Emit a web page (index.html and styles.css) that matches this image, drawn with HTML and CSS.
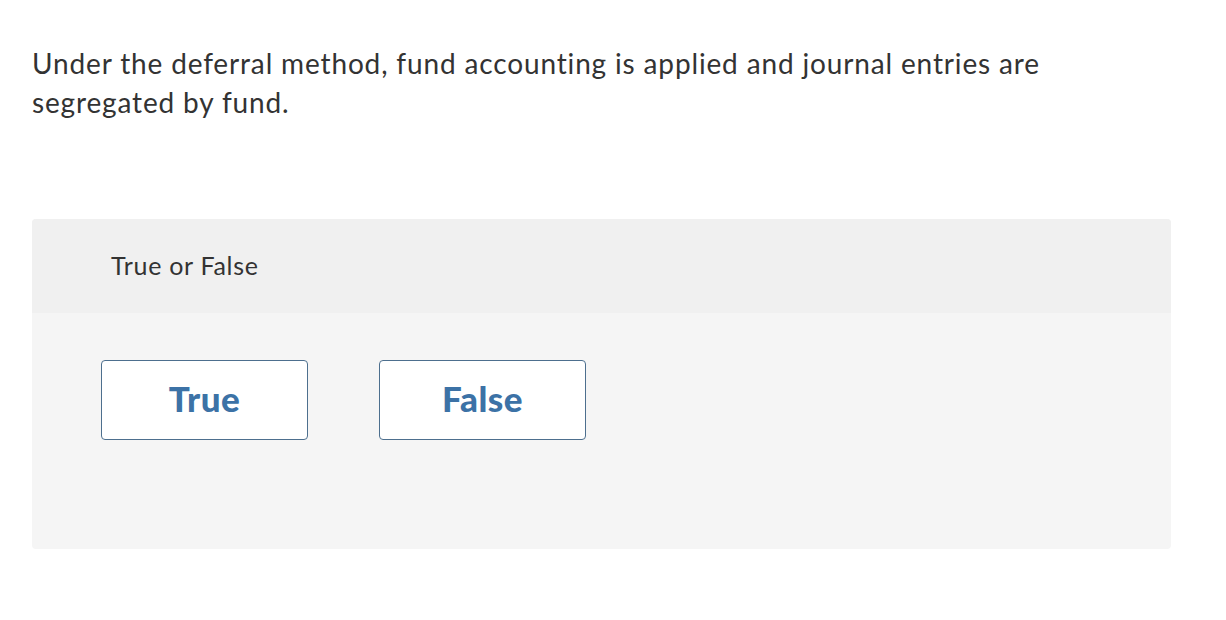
FILE: index.html
```html
<!DOCTYPE html>
<html lang="en">
<head>
    <meta charset="UTF-8">
    <title>True or False</title>
    <link rel="stylesheet" href="styles.css">
</head>
<body>

    <!-- Question -->
    <p class="prompt">Under the deferral method, fund accounting is applied and journal entries are segregated by fund.</p>

    <!-- Answer card -->
    <div class="card">
        <div class="card-head">True or False</div>
        <div class="card-body">
            <button class="choice">True</button>
            <button class="choice">False</button>
        </div>
    </div>

</body>
</html>
```

FILE: styles.css
```css
body {
    margin: 0;
    padding: 44px 32px 0 32px;
    font-family: 'Lato', 'Open Sans', sans-serif;
    color: #333;
    background-color: #fff;
}
.prompt {
    margin: 0;
    font-size: 28px;
    line-height: 39px;
    letter-spacing: 0.85px;
    max-width: 1060px;
}
.card {
    margin-top: 97px;
    width: 1139px;
    border-radius: 4px;
    overflow: hidden;
    background-color: #f5f5f5;
}
.card-head {
    background-color: #f0f0f0;
    height: 94px;
    padding-left: 79px;
    font-size: 25px;
    line-height: 92px;
    letter-spacing: 0.7px;
    color: #333;
}
.card-body {
    display: flex;
    gap: 71px;
    padding: 47px 69px 109px 69px;
}
.choice {
    width: 207px;
    height: 80px;
    padding: 0 0 4px 0;
    background-color: #fff;
    border: 1px solid #4d6f8e;
    border-radius: 4px;
    font-family: 'Lato', 'Open Sans', sans-serif;
    font-weight: 900;
    font-size: 35px;
    letter-spacing: 0.5px;
    color: #3c72a6;
    cursor: pointer;
}
```
